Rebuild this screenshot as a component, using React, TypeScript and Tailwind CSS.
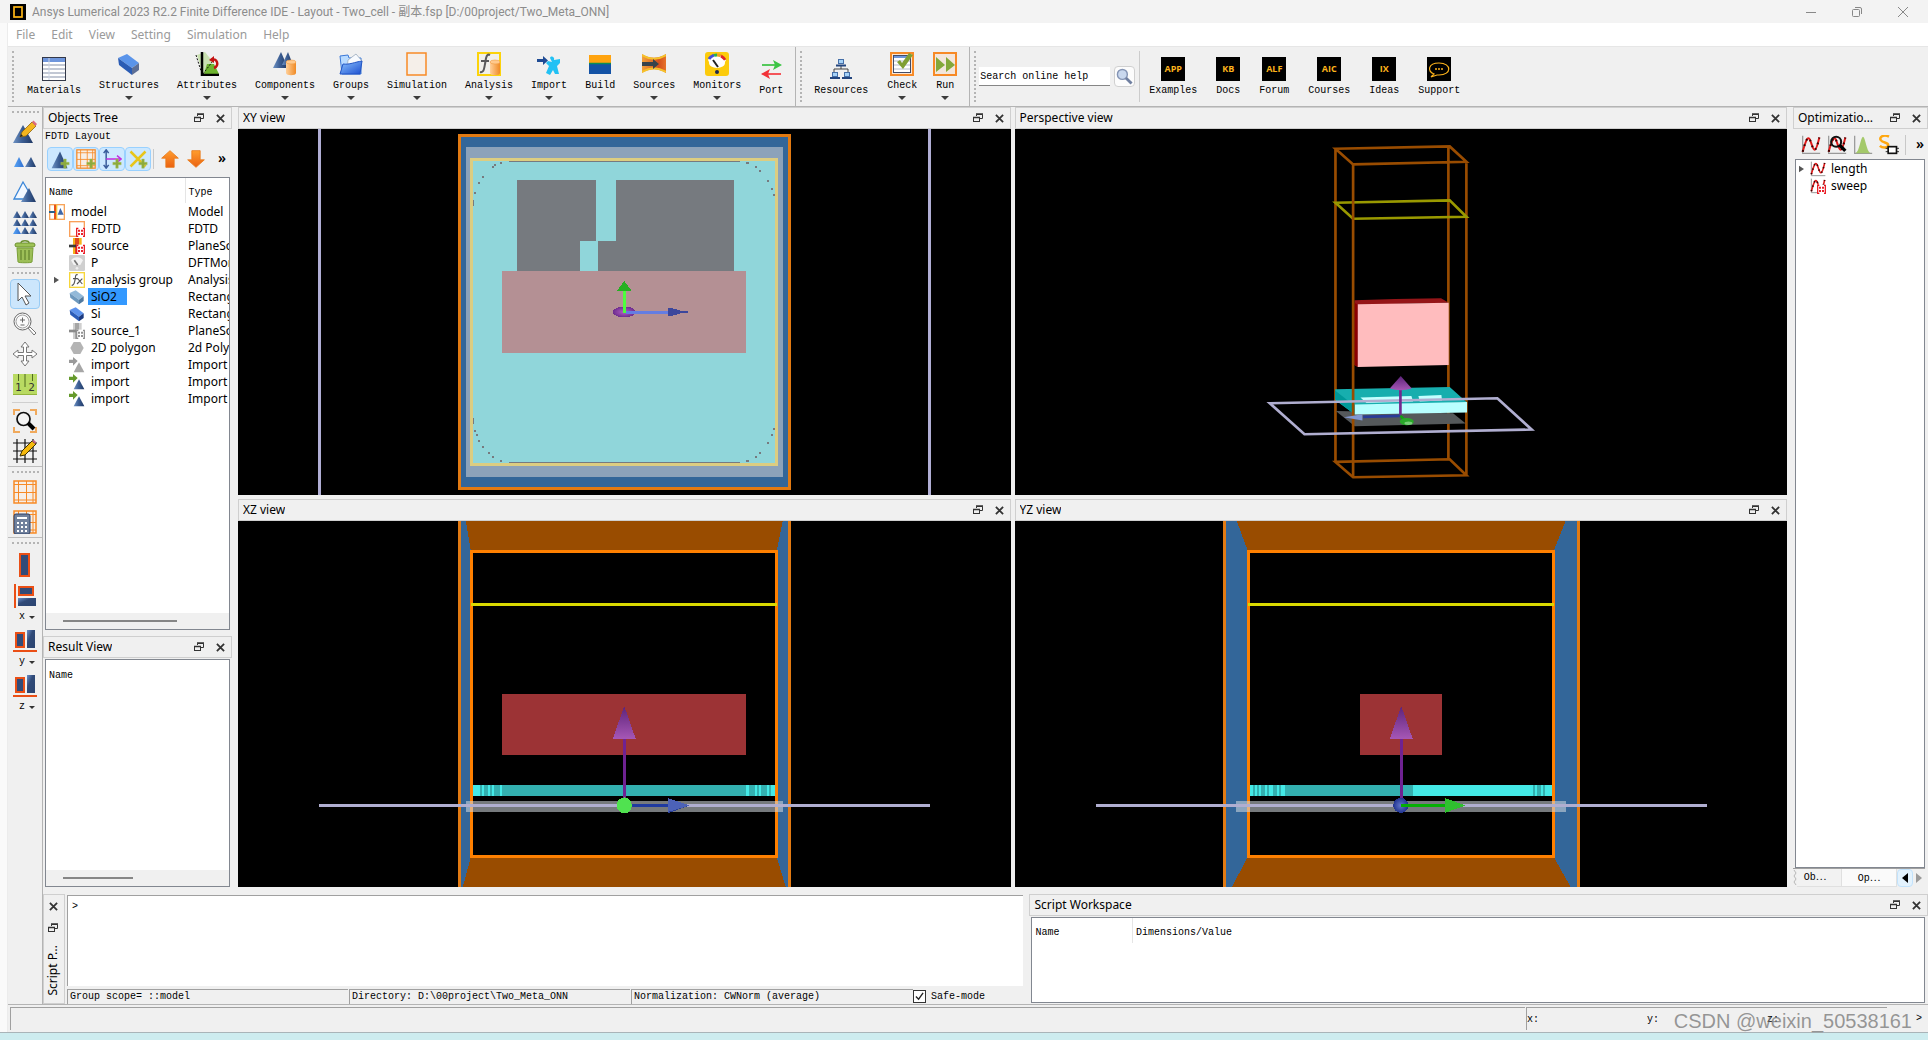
import { useState } from "react";
import type { ReactNode } from "react";

type ToolItem = {
  label: string;
  icon: ReactNode;
  menu?: boolean;
};

type TreeRow = {
  name: string;
  type: string;
  icon: ReactNode;
  root?: boolean;
  expandable?: boolean;
};

/* ---------- icons ---------- */

function Svg({ children, size = 24 }: { children: ReactNode; size?: number }) {
  return (
    <svg viewBox="0 0 24 24" width={size} height={size} fill="none" className="block shrink-0">
      {children}
    </svg>
  );
}

function Defs() {
  return (
    <svg width="0" height="0" className="absolute">
      <defs>
        <linearGradient id="navy" x1="0" y1="0" x2="1" y2="0">
          <stop offset="0" stopColor="#6f93c4" />
          <stop offset="0.45" stopColor="#3d5f94" />
          <stop offset="1" stopColor="#1f3864" />
        </linearGradient>
        <linearGradient id="sky" x1="0" y1="0" x2="1" y2="0">
          <stop offset="0" stopColor="#5aa5f5" />
          <stop offset="1" stopColor="#2f6fd0" />
        </linearGradient>
        <linearGradient id="cyl" x1="0" y1="0" x2="1" y2="0">
          <stop offset="0" stopColor="#ffd09a" />
          <stop offset="1" stopColor="#f08a24" />
        </linearGradient>
        <linearGradient id="orange" x1="0" y1="0" x2="0" y2="1">
          <stop offset="0" stopColor="#ff9d2e" />
          <stop offset="1" stopColor="#ea6112" />
        </linearGradient>
        <linearGradient id="slab" x1="0" y1="0" x2="1" y2="1">
          <stop offset="0" stopColor="#6b8fc9" />
          <stop offset="0.4" stopColor="#304a78" />
          <stop offset="1" stopColor="#2b4470" />
        </linearGradient>
        <linearGradient id="folder" x1="0" y1="0" x2="1" y2="1">
          <stop offset="0" stopColor="#8ec5ff" />
          <stop offset="1" stopColor="#1c4fd0" />
        </linearGradient>
        <linearGradient id="purple" x1="0" y1="0" x2="0" y2="1">
          <stop offset="0" stopColor="#5c2379" />
          <stop offset="1" stopColor="#a657b6" />
        </linearGradient>
        <radialGradient id="ball">
          <stop offset="0" stopColor="#b561c4" />
          <stop offset="1" stopColor="#6c2b8e" />
        </radialGradient>
        <radialGradient id="blueBall">
          <stop offset="0" stopColor="#6478cc" />
          <stop offset="1" stopColor="#20338f" />
        </radialGradient>
        <linearGradient id="beam" x1="0" y1="0" x2="1" y2="0">
          <stop offset="0" stopColor="#f2a13c" />
          <stop offset="0.7" stopColor="#d24f1e" />
          <stop offset="1" stopColor="#e8732a" />
        </linearGradient>
      </defs>
    </svg>
  );
}

const Plus = () => <path d="M13 16h3.500v-4h3v4H23v3h-3.500v4h-3v-4H13z" fill="#8cab3d" stroke="#a9c25e" strokeWidth="0.5" />;

const PencilShape = () => (
  <g>
    <path d="M7 17l2-5L19 2l4 4-10 10z" fill="#f4b51e" stroke="#8c6410" strokeWidth="0.8" />
    <path d="M19 2l1.500-1.500 3.500 3.500L22.500 6z" fill="#dc6a80" />
    <path d="M7 17l1-3 2 2z" fill="#222" />
  </g>
);

const MaterialsIcon = () => (
  <Svg>
    <rect x="0.500" y="0.500" width="23" height="23" fill="#fff" stroke="#333848" />
    <rect x="1" y="1" width="22" height="4" fill="#6f96dc" />
    <path d="M1 8h22M1 12h22M1 16h22M1 20h22" stroke="#aeb6c6" strokeWidth="1.500" />
    <path d="M7 1v22" stroke="#cdd5e4" />
  </Svg>
);

const Slab = ({ top, side, end }: { top: string; side: string; end: string }) => (
  <g>
    <path d="M1 6l9-4 12 9-7 5z" fill={top} />
    <path d="M1 6l14 10v7L2 13z" fill={side} />
    <path d="M15 16l7-5v7l-7 5z" fill={end} />
  </g>
);

const StructuresIcon = () => (
  <Svg>
    <Slab top="#5a94ea" side="#2a5cb4" end="#5d6f96" />
  </Svg>
);

const AttributesIcon = () => (
  <Svg>
    <path d="M2 3l8-3 8 10-4 8-6 4z" fill="#c9e0b0" />
    <path d="M12 12h7l5 10H9z" fill="#6db32e" />
    <path d="M7 0v23h17" stroke="#000" strokeWidth="2.500" />
    <path d="M1 3l5 16M8 22l9-12" stroke="#111" strokeDasharray="2 1.500" />
    <path d="M16 8c6-3 9 6 3 8" stroke="#c41212" strokeWidth="2.500" />
    <path d="M14 8l5-4v7z" fill="#c41212" />
  </Svg>
);

const Cylinder = () => (
  <g>
    <path d="M13 10v11c0 3 10 3 10 0V10z" fill="url(#cyl)" />
    <ellipse cx="18" cy="10" rx="5" ry="2" fill="#ffc98c" stroke="#f09a42" strokeWidth="0.600" />
  </g>
);

const ComponentsIcon = () => (
  <Svg>
    <path d="M8 0l7 16H0z" fill="url(#navy)" />
    <path d="M15 0l5 13H9z" fill="url(#navy)" />
    <Cylinder />
  </Svg>
);

const GroupsIcon = () => (
  <Svg>
    <path d="M1 4l8-1 1 3h12v16H3z" fill="#b9dbff" stroke="#3b78d8" />
    <path d="M9 8l8-6 6 7-4 8H8z" fill="#f7fafe" stroke="#9ab" strokeWidth="0.800" />
    <path d="M1 22l3-10c6 1 12-2 19-3l-2 13z" fill="url(#folder)" stroke="#2255c4" />
  </Svg>
);

const SimulationIcon = () => (
  <Svg>
    <rect x="2" y="1" width="19" height="22" fill="#f5efe9" stroke="#f78a26" strokeWidth="1.500" />
  </Svg>
);

const AnalysisIcon = () => (
  <Svg>
    <rect x="1" y="1" width="22" height="22" fill="#f1f0ea" stroke="#fcd30a" strokeWidth="2" />
    <path d="M13 3c-4-2-4 4-5 9s-1 9-5 8M4 9h8" stroke="#5a5a5a" strokeWidth="2" />
    <Cylinder />
  </Svg>
);

const ImportIcon = () => (
  <Svg>
    <path d="M0 7h6V4l5 4.500L6 13v-3H0z" fill="#1f4b94" />
    <path d="M13 6c1-3 5-1 4 2l6-1v4l-3 3 2 8h-4l-2-4-3 5-4-2 3-7-3-3 2-2 4 1z" fill="#22c1f4" />
  </Svg>
);

const BuildIcon = () => (
  <Svg>
    <rect x="1" y="3" width="22" height="9" fill="#ffa30f" />
    <rect x="1" y="11" width="22" height="11" fill="#1453a6" />
    <path d="M1 11.500h22" stroke="#0c8f55" strokeWidth="1.500" />
  </Svg>
);

const SourcesIcon = () => (
  <Svg>
    <path d="M0 2c8 5 16 5 24 0v19c-8-5-16-5-24 0z" fill="url(#beam)" />
    <path d="M0 3c8 5 16 5 24 0M0 20c8-5 16-5 24 0" stroke="#f5c22a" strokeWidth="2" />
    <path d="M0 10h11V7l6 5-6 5v-3H0z" fill="#37424c" />
  </Svg>
);

const MonitorsIcon = () => (
  <Svg>
    <rect x="0" y="0" width="24" height="24" rx="3" fill="#fccb0c" />
    <path d="M3 8c4-7 14-7 18 0l-3 6H6z" fill="#fff" />
    <path d="M4 7c1-2 3-3 5-4" stroke="#4750d8" strokeWidth="3" />
    <path d="M9 3.500c1-.5 2-.5 3-.5" stroke="#2bb24c" strokeWidth="3" />
    <path d="M12 3c2 0 3 0 4 1" stroke="#f0a020" strokeWidth="3" />
    <path d="M16 4c2 1 3 2 4 4" stroke="#e02626" strokeWidth="3" />
    <ellipse cx="12" cy="11" rx="8" ry="5" fill="#fff" />
    <path d="M8 8l5 7" stroke="#222" strokeWidth="2" />
    <circle cx="12" cy="20" r="2" fill="#1c2850" />
  </Svg>
);

const PortIcon = () => (
  <Svg>
    <path d="M3 8h13" stroke="#55c95b" strokeWidth="2" />
    <path d="M14 3l9 5-9 5 2-5z" fill="#3cc545" />
    <path d="M9 17h13" stroke="#f4555a" strokeWidth="2" />
    <path d="M11 12l-9 5 9 5-2-5z" fill="#f23238" />
  </Svg>
);

const ResourcesIcon = () => (
  <Svg>
    <path d="M12 8v4M5 15v-3h14v3" stroke="#444" />
    <rect x="9.500" y="2.500" width="5" height="4" fill="#a5d2f8" stroke="#456fa8" />
    <path d="M7 8.500h10" stroke="#23457e" strokeWidth="2" />
    <rect x="3.500" y="15.500" width="5" height="4" fill="#a5d2f8" stroke="#456fa8" />
    <rect x="15.500" y="15.500" width="5" height="4" fill="#a5d2f8" stroke="#456fa8" />
    <path d="M1 21h10M13 21h10" stroke="#23457e" strokeWidth="2" />
  </Svg>
);

const CheckIcon = () => (
  <Svg>
    <rect x="1" y="1" width="22" height="22" fill="#fbe6d5" stroke="#f78a26" strokeWidth="2" />
    <rect x="3.500" y="3.500" width="17" height="17" fill="#fff" stroke="#444c66" />
    <path d="M4 5h16" stroke="#6f96dc" strokeWidth="2" />
    <path d="M4 9h16M4 13h16M4 17h16" stroke="#b5bccb" />
    <path d="M7 10l3-2 2 3 7-10 4 2-10 14z" fill="#7f9f33" />
  </Svg>
);

const RunIcon = () => (
  <Svg>
    <rect x="1" y="1" width="22" height="22" fill="#f3e6dc" stroke="#f78a26" strokeWidth="2" />
    <path d="M3 5l9 8-9 7zM13 5l9 8-9 7z" fill="#84a83a" />
  </Svg>
);

const Badge = ({ text }: { text: string }) => (
  <span className="flex h-6 w-6 items-center justify-center bg-black font-['Open_Sans',sans-serif] text-[9px] font-bold text-[#fcb31c]">
    {text}
  </span>
);

const SupportIcon = () => (
  <Svg>
    <rect width="24" height="24" fill="#000" />
    <path d="M7 17c-7-3-6-11 5-11 13 0 13 12 0 12H10l-6 2z" stroke="#fcb31c" strokeWidth="1.200" />
    <path d="M8 12h2M11 12h2M14 12h2" stroke="#fcb31c" strokeWidth="1.500" />
  </Svg>
);

const TriPencilIcon = () => (
  <Svg>
    <path d="M10 5l10 18H0z" fill="url(#navy)" />
    <PencilShape />
  </Svg>
);

const TwoTriIcon = () => (
  <Svg>
    <path d="M6 7l5 10H1z" fill="url(#sky)" />
    <path d="M18 7l5 10H12z" fill="url(#navy)" />
  </Svg>
);

const TriOutlineIcon = () => (
  <Svg>
    <path d="M10 2l10 17H1z" fill="#f3f8ff" stroke="#3a86d8" strokeWidth="1.300" />
    <path d="M16 8l7 14H8z" fill="url(#navy)" />
  </Svg>
);

const TriArrayIcon = () => (
  <Svg>
    {[0, 8, 16].map((x) =>
      [1, 9, 17].map((y) => (
        <path
          key={`${x}-${y}`}
          d={`M${x + 4} ${y}l4 7h-8z`}
          fill={x === 0 && y === 17 ? "url(#sky)" : "url(#navy)"}
        />
      ))
    )}
  </Svg>
);

const TrashIcon = () => (
  <Svg>
    <path d="M8 3c0-3 8-3 8 0" stroke="#6d9030" strokeWidth="1.500" />
    <rect x="2" y="3" width="20" height="4" rx="2" fill="#9ec356" stroke="#6d9030" />
    <path d="M4 8h16l-1 14c0 1-14 1-14 0z" fill="#9dbf58" stroke="#7a9f38" />
    <path d="M8 10v10M12 10v10M16 10v10" stroke="#6d8f35" strokeWidth="1.500" />
  </Svg>
);

const CursorIcon = () => (
  <Svg>
    <path d="M5 1v18l4-4 4 8 3-2-4-7h6z" fill="#fff" stroke="#555" />
  </Svg>
);

const ZoomIcon = () => (
  <Svg>
    <circle cx="9.500" cy="9.500" r="8.500" fill="#fafafa" stroke="#666" strokeWidth="1" />
    <circle cx="9.500" cy="9.500" r="6.500" stroke="#888" strokeWidth="0.800" />
    <path d="M7 8h5M9.500 5.500v5M7.500 13h4" stroke="#666" />
    <path d="M15 16l6 7 2-2-6-6z" fill="#fff" stroke="#777" />
  </Svg>
);

const MoveIcon = () => (
  <Svg>
    <path
      d="M12 0l4 5h-2.500v5.500H19V8l5 4-5 4v-2.500h-5.500V19H16l-4 5-4-5h2.500v-5.500H5V16l-5-4 5-4v2.500h5.500V5H8z"
      fill="#fff"
      stroke="#777"
    />
  </Svg>
);

const RulerIcon = () => (
  <span className="relative block h-[21px] w-6 bg-[#b9da62] text-center font-['DejaVu_Sans_Mono',monospace] text-[11px] leading-[27px] text-[#333]">
    <svg viewBox="0 0 24 21" className="absolute inset-0" fill="none">
      <path d="M5.500 0v7M19.500 0v7M12 0v13" stroke="#4f6b1f" />
      <path d="M0 20.500h24" stroke="#94b53d" />
    </svg>
    1 2
  </span>
);

const FitIcon = () => (
  <Svg>
    <path d="M1 6V1h6M17 1h6v5M23 18v5h-6M7 23H1v-5" stroke="#f0a95c" strokeWidth="2" />
    <circle cx="10.500" cy="10" r="6.500" fill="#f4f4f4" stroke="#111" strokeWidth="1.700" />
    <path d="M15 14l6 6" stroke="#000" strokeWidth="4" />
  </Svg>
);

const GridPencilIcon = () => (
  <Svg>
    <path d="M4 0v24M12 0v24M20 0v24M0 4h24M0 12h24M0 20h24" stroke="#111" strokeWidth="1.200" />
    <path d="M7 17l2-5L19 2l4 3-11 11z" fill="#f4b90e" stroke="#3d3000" />
    <path d="M19 2l2-1 2 2-1 2z" fill="#c06282" />
  </Svg>
);

const GridShape = () => (
  <g stroke="#f78a26">
    <rect x="1" y="1" width="22" height="22" strokeWidth="1.500" fill="#f6eee7" />
    <path d="M5.500 1v22M13.500 1v22M20 1v22M1 4.500h22M1 12.500h22M1 20h22" />
  </g>
);

const GridIcon = () => (
  <Svg>
    <GridShape />
  </Svg>
);

const CalcIcon = () => (
  <Svg>
    <GridShape />
    <rect x="1" y="4" width="16" height="20" rx="2" fill="#71819d" stroke="#2c416b" />
    <path d="M4 8h10" stroke="#fff" strokeWidth="2" />
    <path d="M4 13h10M4 17h10M4 21h10" stroke="#fff" strokeWidth="2" strokeDasharray="2 2" />
  </Svg>
);

const RectIcon = () => (
  <Svg>
    <rect x="7" y="1" width="9" height="22" fill="#324b78" stroke="#ea4f16" strokeWidth="2" />
  </Svg>
);

const AlignXIcon = () => (
  <Svg>
    <path d="M2 0v24" stroke="#ea4f16" strokeWidth="2" />
    <rect x="6" y="3" width="14" height="8" fill="#324b78" stroke="#ea4f16" strokeWidth="2" />
    <rect x="5" y="14" width="18" height="8" fill="url(#slab)" />
  </Svg>
);

const AlignYIcon = () => (
  <Svg>
    <path d="M0 22h24" stroke="#ea4f16" strokeWidth="2" />
    <rect x="3" y="4" width="8" height="14" fill="#324b78" stroke="#ea4f16" strokeWidth="2" />
    <rect x="14" y="1" width="8" height="18" fill="url(#slab)" />
  </Svg>
);

const Matrix = ({ color }: { color: string }) => (
  <g>
    <rect x="11" y="10" width="13" height="14" fill="#fff" />
    <path d="M14 11h-2.500v12H14M21 11h2v12h-2" stroke={color} strokeWidth="1.800" />
    <path d="M15 13v3M19.500 13v3M15 18v3M19.500 18v3" stroke={color} strokeWidth="2.800" />
  </g>
);

const ModelIcon = () => (
  <Svg size={16}>
    <rect x="1" y="1" width="22" height="22" fill="#fff" stroke="#f7a45a" strokeWidth="2" />
    <path d="M9 1v22" stroke="#e8541c" strokeWidth="3" />
    <path d="M11.500 1v22" stroke="#f6c53c" strokeWidth="2" />
    <path d="M0 12h9" stroke="#2d6288" strokeWidth="3" />
    <path d="M17 6l5 10h-9z" fill="#3f67a8" />
  </Svg>
);

const FdtdIcon = () => (
  <Svg size={16}>
    <rect x="1" y="1" width="22" height="22" fill="#fff" stroke="#f9a05a" strokeWidth="2" />
    <Matrix color="#e8121c" />
  </Svg>
);

const SourceIcon = ({ gray = false }: { gray?: boolean }) => (
  <Svg size={16}>
    <rect x="6" y="0" width="13" height="24" fill={gray ? "#cfcfcf" : "#f5b31c"} />
    <rect x="9" y="0" width="6" height="24" fill={gray ? "#a5a5a5" : "#dd4a1c"} />
    <path d="M0 12h13" stroke={gray ? "#8a8a8a" : "#3a3a3a"} strokeWidth="4" />
    <Matrix color={gray ? "#8c8c8c" : "#e8121c"} />
  </Svg>
);

const MonitorGrayIcon = () => (
  <Svg size={16}>
    <rect width="24" height="24" rx="2" fill="#cfcfcf" />
    <path d="M3 8c4-6 14-6 18 0l-4 7H7z" fill="#f3f3f3" />
    <path d="M8 8l5 7" stroke="#777" strokeWidth="2.500" />
    <circle cx="12" cy="20" r="2" fill="#eee" />
  </Svg>
);

const FxIcon = () => (
  <Svg size={16}>
    <rect x="1" y="1" width="22" height="22" fill="#fff" stroke="#f7d63a" strokeWidth="2" />
    <path d="M13 4c-4-1-3 4-4 8s-1 8-5 8M6 10h7M13 10l7 8M20 10l-8 8" stroke="#555" strokeWidth="1.700" />
  </Svg>
);

const SlabIcon = ({ pale = false }: { pale?: boolean }) => (
  <Svg size={16}>
    {pale ? (
      <Slab top="#93b9d8" side="#6d98bd" end="#51799e" />
    ) : (
      <Slab top="#5c92ec" side="#2a5cb8" end="#1b3a80" />
    )}
  </Svg>
);

const PolygonIcon = () => (
  <Svg size={16}>
    <path d="M7 3h10l5 9-5 9H7l-5-9z" fill="#b4b4b4" />
  </Svg>
);

const ImportRowIcon = ({ gray = false }: { gray?: boolean }) => (
  <Svg size={16}>
    <path d="M15 8l8 15H7z" fill={gray ? "#a6a6a6" : "url(#navy)"} />
    <path d="M0 4h6V0l7 6-7 7V9H0z" fill={gray ? "#9a9a9a" : "#659a2c"} />
  </Svg>
);

const SweepShape = () => (
  <g>
    <path d="M2 1v21h21" stroke="#999" strokeWidth="1.500" />
    <path d="M2 20C7 2 9 0 12 9s5 16 10-6" stroke="#e01919" strokeWidth="2.400" />
    <path d="M2 20C7 2 9 0 12 9s5 16 10-6" stroke="#300" strokeWidth="2.400" strokeDasharray="2 5" />
  </g>
);

const FloatIcon = () => (
  <svg viewBox="0 0 10 10" width="10" height="10" fill="none" stroke="#333">
    <path d="M3.500 3V1.500h6v4H7" />
    <path d="M3 1h7" strokeWidth="1.500" />
    <rect x="0.500" y="4.500" width="6" height="4" />
    <path d="M0 4.500h7" strokeWidth="1.500" />
  </svg>
);

const CloseIcon = () => (
  <svg viewBox="0 0 10 10" width="9" height="9" stroke="#333" strokeWidth="2">
    <path d="M1 1l8 8M9 1L1 9" />
  </svg>
);

/* ---------- data ---------- */

const mainTools: ToolItem[] = [
  { label: "Materials", icon: <MaterialsIcon /> },
  { label: "Structures", icon: <StructuresIcon />, menu: true },
  { label: "Attributes", icon: <AttributesIcon />, menu: true },
  { label: "Components", icon: <ComponentsIcon />, menu: true },
  { label: "Groups", icon: <GroupsIcon />, menu: true },
  { label: "Simulation", icon: <SimulationIcon />, menu: true },
  { label: "Analysis", icon: <AnalysisIcon />, menu: true },
  { label: "Import", icon: <ImportIcon />, menu: true },
  { label: "Build", icon: <BuildIcon />, menu: true },
  { label: "Sources", icon: <SourcesIcon />, menu: true },
  { label: "Monitors", icon: <MonitorsIcon />, menu: true },
  { label: "Port", icon: <PortIcon /> },
];

const runTools: ToolItem[] = [
  { label: "Resources", icon: <ResourcesIcon /> },
  { label: "Check", icon: <CheckIcon />, menu: true },
  { label: "Run", icon: <RunIcon />, menu: true },
];

const helpTools: ToolItem[] = [
  { label: "Examples", icon: <Badge text="APP" /> },
  { label: "Docs", icon: <Badge text="KB" /> },
  { label: "Forum", icon: <Badge text="ALF" /> },
  { label: "Courses", icon: <Badge text="AIC" /> },
  { label: "Ideas", icon: <Badge text="IX" /> },
  { label: "Support", icon: <SupportIcon /> },
];

const treeRows: TreeRow[] = [
  { name: "model", type: "Model", icon: <ModelIcon />, root: true },
  { name: "FDTD", type: "FDTD", icon: <FdtdIcon /> },
  { name: "source", type: "PlaneSource", icon: <SourceIcon /> },
  { name: "P", type: "DFTMonitor", icon: <MonitorGrayIcon /> },
  { name: "analysis group", type: "Analysis Group", icon: <FxIcon />, expandable: true },
  { name: "SiO2", type: "Rectangle", icon: <SlabIcon pale /> },
  { name: "Si", type: "Rectangle", icon: <SlabIcon /> },
  { name: "source_1", type: "PlaneSource", icon: <SourceIcon gray /> },
  { name: "2D polygon", type: "2d Polygon", icon: <PolygonIcon /> },
  { name: "import", type: "Import", icon: <ImportRowIcon gray /> },
  { name: "import", type: "Import", icon: <ImportRowIcon /> },
  { name: "import", type: "Import", icon: <ImportRowIcon /> },
];

const menus = ["File", "Edit", "View", "Setting", "Simulation", "Help"];

/* ---------- shared pieces ---------- */

function ToolGroup({ items, spaced = false }: { items: ToolItem[]; spaced?: boolean }) {
  return (
    <div className={`flex items-center pt-[2px] ${spaced ? "gap-px" : ""}`}>
      {items.map((item) => (
        <button key={item.label} className="flex flex-col items-center px-[9px]">
          <span className="-mx-1 flex h-6 w-6 items-center justify-center">{item.icon}</span>
          <span className="pt-[2px] text-[10px] leading-4">{item.label}</span>
          {item.menu && (
            <svg viewBox="0 0 10 10" width="10" height="10" className="-mt-px">
              <path d="M1 3h8L5 7z" fill="#3c3c3c" />
            </svg>
          )}
        </button>
      ))}
    </div>
  );
}

const GripV = () => <div className="my-1 w-0 border-l-2 border-dotted border-[#b4b4b4]" />;
const GripH = () => <div className="my-1 h-0 w-[27px] self-center border-t-2 border-dotted border-[#b4b4b4]" />;

function DockTitle({ title }: { title: string }) {
  return (
    <div className="flex h-[22px] shrink-0 items-center justify-between border border-[#cfcfcf] pr-[6px] pl-1 font-['Noto_Sans','Noto_Sans_CJK_SC',sans-serif] text-xs">
      <span className="mr-3 truncate pb-px leading-[19px]">{title}</span>
      <span className="flex shrink-0 items-center gap-3">
        <button aria-label={`Float ${title}`}>
          <FloatIcon />
        </button>
        <button aria-label={`Close ${title}`}>
          <CloseIcon />
        </button>
      </span>
    </div>
  );
}

function View({ title, children }: { title: string; children: ReactNode }) {
  return (
    <section className="flex min-h-0 min-w-0 flex-col">
      <DockTitle title={title} />
      <div className="min-h-0 flex-1 bg-black">
        <svg viewBox="0 0 773 366" className="block h-full w-full">
          {children}
        </svg>
      </div>
    </section>
  );
}

function SideButton({ label, active, onClick, children }: { label: string; active?: boolean; onClick?: () => void; children: ReactNode }) {
  return (
    <button
      aria-label={label}
      onClick={onClick}
      className={`mx-[2px] flex h-[30px] items-center justify-center rounded-sm border ${
        active ? "border-[#99ccf5] bg-[#cce6fc]" : "border-transparent"
      }`}
    >
      {children}
    </button>
  );
}

function AlignButton({ label, children }: { label: string; children: ReactNode }) {
  return (
    <button className="flex h-[45px] flex-col items-center pt-1">
      {children}
      <span className="flex items-center gap-1 pt-px pl-1 text-[10px] leading-4">
        {label}
        <svg viewBox="0 0 6 6" width="6" height="6">
          <path d="M0 2h6L3 5z" fill="#333" />
        </svg>
      </span>
    </button>
  );
}

const SideRule = () => <div className="h-px shrink-0 bg-[#bdbdbd]" />;

/* ---------- scenes ---------- */

const dots = [
  [182, 158], [164, 164], [158, 170], [128, 200], [116, 218], [104, 248],
  [920, 158], [924, 158], [948, 170], [960, 182], [984, 212], [996, 236], [1002, 254],
  [104, 962], [110, 974], [116, 992], [128, 1010], [146, 1028], [158, 1040], [182, 1052],
  [1002, 956], [996, 974], [984, 998], [960, 1028], [948, 1040], [920, 1052], [924, 1052],
];

function XYScene() {
  return (
    <g shapeRendering="crispEdges">
      <path d="M81.500 0v366M691.500 0v366" stroke="#b0aed4" strokeWidth="3" />
      <rect x="221.500" y="6.500" width="330" height="353" fill="#336699" stroke="#e27a12" strokeWidth="3" />
      <rect x="228" y="18" width="317" height="330" fill="#8ca2ba" />
      <rect x="233.500" y="30.500" width="305" height="305" fill="#90d6da" stroke="#dccd81" strokeWidth="3" />
      <path d="M271 32.500h231M271 333.500h231M235.500 71v6M235.500 289v6" stroke="#767a7f" />
      {dots.map(([x, y]) => (
        <rect key={`${x}-${y}`} x={Math.round(201 + x / 3)} y={Math.round(y / 3 - 20)} width="2" height="2" fill="#767a7f" />
      ))}
      <path d="M279 51h79v61h-16v30h-63zM378 51h118v91H360v-30h18z" fill="#767a7f" />
      <rect x="264" y="142" width="244" height="82" fill="#b49094" />
      <ellipse cx="386.500" cy="183" rx="11.500" ry="5.500" fill="url(#ball)" />
      <path d="M388 183.500h42" stroke="#647de2" strokeWidth="3" />
      <path d="M430 179h2l6 1 6 2h6v2h-6l-6 2-6 1h-2z" fill="#3b469c" />
      <path d="M386.500 162v22" stroke="#4dff3c" strokeWidth="3" />
      <path d="M386.500 152l7.500 10h-15z" fill="#25b022" />
    </g>
  );
}

function PerspectiveScene() {
  return (
    <g transform="translate(225 -9) scale(0.33333)" fill="none" strokeWidth="8">
      <path d="M287 86L630 79L680 125L340 133ZM287 1026L630 1018L680 1066L340 1072ZM287 86V1026M626 79V1018M680 125V1066" stroke="#994c00" />
      <path d="M287 248L630 241L680 290L340 296Z" stroke="#999900" />
      <path d="M344 541L466 537L604 535L627 548L354 554V741L344 735Z" fill="#951518" />
      <path d="M344 548V735L354 741V554Z" fill="#8b0000" />
      <path d="M354 553L627 548V735L354 741Z" fill="#ffbcbe" />
      <path d="M288 873L640 880L678 911L345 919Z" fill="#55595b" />
      <path d="M286 808L630 801L682 848L345 856V884L286 840Z" fill="#17aeae" />
      <path d="M286 812L345 858V884L286 838Z" fill="#009999" />
      <path d="M345 854L682 846V878L345 884Z" fill="#b8ffff" />
      <path d="M362 833L515 828L520 845L380 849ZM536 828L605 825L607 842L540 845Z" fill="#c4ffff" />
      <path d="M340 133V1072" stroke="#994c00" />
      <path d="M90 850L773 835L876 929L194 943Z" stroke="#b0aed0" />
      <path d="M482 888L370 891" stroke="#2a3c98" />
      <path d="M312 892L368 883V902Z" fill="#8197d2" />
      <path d="M482 888L498 904" stroke="#12a012" />
      <ellipse cx="501" cy="905" rx="21" ry="11" fill="#2aa82a" />
      <ellipse cx="506" cy="910" rx="12" ry="5" fill="#77cf77" />
      <path d="M482 808V884" stroke="#74288e" />
      <path d="M483 768L516 806Q483 816 450 806Z" fill="url(#purple)" />
    </g>
  );
}

type SideSceneProps = {
  wall: number;
  topInset: number;
  bottomInset: number;
  source: [number, number];
  plate: [number, number];
  base: string;
  children: ReactNode;
};

/* XZ and YZ share the same frame, only the wall thickness and contents differ */
function SideScene({ wall, topInset, bottomInset, source, plate, base, children }: SideSceneProps) {
  return (
    <g shapeRendering="crispEdges">
      <rect x={wall} y="0" width={773 - wall * 2} height="366" fill="#336699" />
      <path d={`M${topInset} 0H${773 - topInset}L539 30H233Z`} fill="#994c00" />
      <path d={`M233 336H539L${773 - bottomInset} 366H${bottomInset}Z`} fill="#994c00" />
      <path d={`M${wall + 1.5} 0V366M${771.5 - wall} 0V366`} stroke="#e27a12" strokeWidth="3" />
      <rect x="233.500" y="30.500" width="305" height="305" fill="#000" stroke="#ff8000" strokeWidth="3" />
      <rect x="233" y="82" width="306" height="3" fill="#dada00" />
      <rect x={source[0]} y="173" width={source[1]} height="61" fill="#9c3335" />
      <rect x="235" y="264" width="302" height="11" fill="#33b0b0" />
      <path d={base} fill="#44e9e6" />
      <rect x={plate[0]} y="280" width={plate[1]} height="11" fill="#cfd6dc" opacity="0.57" />
      <rect x="81" y="283" width="611" height="3" fill="#b0aed0" />
      <rect x="385" y="218" width="3" height="60" fill="#6f2292" />
      <path d="M386.500 185l11.500 33h-23z" fill="url(#purple)" />
      {children}
    </g>
  );
}

/* ---------- panels ---------- */

function ObjectsTree() {
  const [selected, setSelected] = useState(5);

  return (
    <section className="flex min-h-0 flex-1 flex-col">
      <DockTitle title="Objects Tree" />
      <div className="pl-[2px] text-[10px] leading-[15px]">FDTD Layout</div>
      <div className="flex h-[29px] items-center pl-1">
        {[
          <path key="a" d="M12 3l9 20H2z" fill="url(#navy)" />,
          <GridShape key="b" />,
          <g key="c">
            <path d="M5 2v20M2 5l3-4 3 4M2 19l3 4 3-4" stroke="#3a5d9c" strokeWidth="1.800" />
            <path d="M5 12h16M18 8l5 4-5 4" stroke="#c32ae0" strokeWidth="1.800" />
          </g>,
          <path key="d" d="M3 3l18 18M21 3L3 21" stroke="#e8c51b" strokeWidth="3" />,
        ].map((shape, i) => (
          <button
            key={i}
            aria-label={["Add structure", "Add mesh", "Add axis", "Add source"][i]}
            className="flex h-6 w-[26px] items-center justify-center rounded-sm border border-[#99d1ff] bg-[#cce8ff]"
          >
            <Svg size={20}>
              {shape}
              <Plus />
            </Svg>
          </button>
        ))}
        <div className="ml-[2px] h-5 w-px bg-[#c8c8c8]" />
        <button aria-label="Move up" className="ml-[6px]">
          <Svg size={20}>
            <path d="M12 2l10 9h-5v11H7V11H2z" fill="url(#orange)" stroke="#e87818" />
          </Svg>
        </button>
        <button aria-label="Move down" className="ml-[6px]">
          <Svg size={20}>
            <path d="M12 22l10-9h-5V2H7v11H2z" fill="url(#orange)" stroke="#e87818" />
          </Svg>
        </button>
        <button aria-label="More" className="ml-3 pb-[2px] font-['Noto_Sans',sans-serif] text-sm leading-none font-semibold">
          »
        </button>
      </div>
      <div className="mt-1 mr-[2px] ml-[2px] flex min-h-0 flex-1 flex-col border border-[#828790] bg-white">
        <div className="min-h-0 flex-1 overflow-hidden">
          <table className="w-[250px] table-fixed border-collapse">
            <thead>
              <tr className="h-[25px] text-left text-[10px]">
                <th className="w-[139px] border-r border-[#e5e5e5] pt-1 pl-[3px] font-normal">Name</th>
                <th className="pt-1 pl-[3px] font-normal">Type</th>
              </tr>
            </thead>
            <tbody className="font-['Noto_Sans',sans-serif] text-xs">
              {treeRows.map((row, i) => (
                <tr key={i} onClick={() => setSelected(i)} className="h-[17px]">
                  <td className="p-0">
                    <div className={`flex h-[17px] items-center ${row.root ? "pl-[3px]" : "pl-2"}`}>
                      {!row.root && (
                        <svg viewBox="0 0 6 8" width="5" height="8" className="mr-[10px]">
                          {row.expandable && <path d="M0 0l6 4-6 4z" fill="#555" />}
                        </svg>
                      )}
                      {row.icon}
                      <span
                        className={`ml-[3px] pl-[3px] leading-[17px] whitespace-nowrap ${
                          selected === i ? "bg-[#3399ff] pr-[10px]" : ""
                        }`}
                      >
                        {row.name}
                      </span>
                    </div>
                  </td>
                  <td className="p-0 pl-[3px] leading-[17px] whitespace-nowrap">{row.type}</td>
                </tr>
              ))}
            </tbody>
          </table>
        </div>
        <div className="flex h-4 items-center bg-[#f0f0f0] pl-[17px]">
          <div className="h-[2px] w-[114px] bg-[#868686]" />
        </div>
      </div>
    </section>
  );
}

function ResultView() {
  return (
    <section className="mt-[6px] flex h-[251px] shrink-0 flex-col">
      <DockTitle title="Result View" />
      <div className="mt-px mr-[2px] ml-[2px] flex flex-1 flex-col border border-[#828790] bg-white">
        <div className="flex-1 pt-2 pl-[3px] text-[10px] leading-4">Name</div>
        <div className="flex h-4 items-center bg-[#f0f0f0] pl-[17px]">
          <div className="h-[2px] w-[70px] bg-[#868686]" />
        </div>
      </div>
    </section>
  );
}

function OptimizationPanel() {
  return (
    <section className="flex w-[135px] shrink-0 flex-col">
      <DockTitle title="Optimizations and Sweeps" />
      <div className="flex h-[30px] items-center gap-[6px] pt-px pl-2">
        <button aria-label="Create sweep">
          <Svg size={20}>
            <SweepShape />
          </Svg>
        </button>
        <button aria-label="Create optimization">
          <Svg size={20}>
            <SweepShape />
            <circle cx="11" cy="8" r="6" stroke="#111" strokeWidth="2.500" />
            <path d="M15 12l7 7" stroke="#000" strokeWidth="4" />
          </Svg>
        </button>
        <button aria-label="Create yield analysis">
          <Svg size={20}>
            <path d="M2 1v21h21" stroke="#999" strokeWidth="1.500" />
            <path d="M3 22c5-3 6-19 9-20 3 1 4 17 9 20z" fill="#a4c96a" />
          </Svg>
        </button>
        <button aria-label="Create S-parameter sweep">
          <Svg size={20}>
            <path d="M12 2C6-1 0 2 2 6s9 2 9 6-7 4-10 1" stroke="#ffa70f" strokeWidth="3" />
            <rect x="11" y="14" width="10" height="8" fill="#fff" stroke="#111" strokeWidth="2" />
            <path d="M8 16h3M8 20h3M21 16h3M21 20h3" stroke="#111" />
          </Svg>
        </button>
        <div className="h-5 w-px bg-[#c8c8c8]" />
        <button aria-label="More" className="pb-[2px] pl-1 font-['Noto_Sans',sans-serif] text-sm leading-none font-semibold">
          »
        </button>
      </div>
      <ul className="mr-[3px] ml-[2px] flex-1 border border-[#828790] bg-white font-['Noto_Sans',sans-serif] text-xs leading-[17px]">
        <li className="flex items-center pl-[3px]">
          <svg viewBox="0 0 6 8" width="5" height="8" className="mr-[6px]">
            <path d="M0 0l6 4-6 4z" fill="#555" />
          </svg>
          <Svg size={16}>
            <SweepShape />
          </Svg>
          <span className="ml-[5px]">length</span>
        </li>
        <li className="flex items-center pl-[14px]">
          <Svg size={16}>
            <SweepShape />
            <Matrix color="#e8121c" />
          </Svg>
          <span className="ml-[5px]">sweep</span>
        </li>
      </ul>
      <div className="mr-[3px] flex h-[19px] items-stretch border-t border-[#a0a0a0] text-[10px]">
        <svg viewBox="0 0 4 18" width="4" height="18" fill="none" stroke="#b8b8b8">
          <path d="M1 1l2 3-2 3 2 3-2 3 2 3" />
        </svg>
        <button className="w-[45px] border-r border-b border-[#e0e0e0] bg-[#f2f2f2] pr-2">Ob⋯</button>
        <button className="w-[55px] border-r border-b border-[#e0e0e0] bg-[#fafafa] pt-[2px]">Op⋯</button>
        <button aria-label="Previous tab" className="flex w-4 items-center justify-center rounded-sm border border-[#c2e2fb] bg-[#e3f2fd]">
          <svg viewBox="0 0 6 10" width="6" height="10">
            <path d="M6 0v10L0 5z" fill="#000" />
          </svg>
        </button>
        <button aria-label="Next tab" className="flex flex-1 items-center justify-center">
          <svg viewBox="0 0 6 10" width="6" height="10">
            <path d="M0 0v10l6-5z" fill="#9a9a9a" />
          </svg>
        </button>
      </div>
    </section>
  );
}

function ScriptPrompt() {
  return (
    <section className="flex min-w-0 flex-[981] gap-[2px]">
      <div className="flex w-[22px] shrink-0 flex-col items-center gap-3 border border-[#cfcfcf] pt-[7px] pr-[2px]">
        <button aria-label="Close Script Prompt">
          <CloseIcon />
        </button>
        <button aria-label="Float Script Prompt">
          <FloatIcon />
        </button>
        <span className="rotate-180 font-['Noto_Sans',sans-serif] text-xs leading-[18px] [writing-mode:vertical-rl]">Script P...</span>
      </div>
      <div className="flex min-w-0 flex-1 flex-col text-[10px]">
        <textarea
          aria-label="Script prompt"
          defaultValue=">"
          className="mt-px min-h-0 flex-1 resize-none border-t border-l border-[#a0a0a0] bg-white px-1 py-[3px] leading-4 outline-none"
        />
        <div className="mt-[3px] flex h-[15px] leading-[14px] whitespace-pre">
          <span className="w-[281px] border-t border-l border-[#a0a0a0] pl-[2px]">Group scope= ::model</span>
          <span className="ml-px w-[281px] border-t border-l border-[#a0a0a0] pl-[2px]">Directory: D:\00project\Two_Meta_ONN</span>
          <span className="ml-px w-[282px] border-t border-l border-[#a0a0a0] pl-[2px]">Normalization: CWNorm (average)</span>
          <label className="flex items-center gap-[5px]">
            <input type="checkbox" defaultChecked className="peer sr-only" />
            <span className="flex h-[13px] w-[13px] items-center justify-center border border-[#333] bg-white">
              <svg viewBox="0 0 10 10" width="9" height="9" fill="none" stroke="#222" strokeWidth="1.500">
                <path d="M1 5l3 3 5-7" />
              </svg>
            </span>
            Safe-mode
          </label>
        </div>
      </div>
    </section>
  );
}

function ScriptWorkspace() {
  return (
    <section className="ml-[6px] flex min-w-0 flex-[899] flex-col">
      <DockTitle title="Script Workspace" />
      <div className="mt-px mr-[3px] mb-px ml-[2px] flex-1 border border-[#828790] bg-white">
        <table className="w-full table-fixed border-collapse text-left text-[10px]">
          <thead>
            <tr className="h-[25px]">
              <th className="w-[100px] border-r border-[#e5e5e5] pt-[3px] pl-[3px] font-normal">Name</th>
              <th className="pt-[3px] pl-[3px] font-normal">Dimensions/Value</th>
            </tr>
          </thead>
        </table>
      </div>
    </section>
  );
}

export default function App() {
  const [tool, setTool] = useState("select");

  return (
    <div className="flex h-screen flex-col overflow-hidden bg-[#f0f0f0] font-['Liberation_Mono','Noto_Sans_CJK_SC',monospace] text-black">
      <Defs />

      <header className="flex h-[23px] shrink-0 items-center bg-[#f3f3f3] pr-5 pl-[10px] font-['Roboto','Noto_Sans_CJK_SC',sans-serif] text-xs text-[#8c8c8c]">
        <svg viewBox="0 0 16 16" width="16" height="16">
          <rect width="16" height="16" fill="#000" />
          <rect x="4" y="3" width="8" height="10" fill="none" stroke="#fdb515" strokeWidth="1.700" />
        </svg>
        <h1 className="ml-[6px] flex-1 truncate">
          Ansys Lumerical 2023 R2.2 Finite Difference IDE - Layout - Two_cell - 副本.fsp [D:/00project/Two_Meta_ONN]
        </h1>
        <div className="flex items-center gap-[36px]">
          <button aria-label="Minimize">
            <svg viewBox="0 0 10 10" width="10" height="10" stroke="#888">
              <path d="M0 5.500h10" />
            </svg>
          </button>
          <button aria-label="Restore">
            <svg viewBox="0 0 10 10" width="10" height="10" fill="none" stroke="#888">
              <rect x="0.500" y="2.500" width="7" height="7" rx="1" />
              <path d="M3 .5h5q1.500 0 1.500 1.500v5" />
            </svg>
          </button>
          <button aria-label="Close">
            <svg viewBox="0 0 10 10" width="10" height="10" stroke="#888">
              <path d="M0 0l10 10M10 0L0 10" />
            </svg>
          </button>
        </div>
      </header>

      <div className="flex min-h-0 flex-1">
        <div className="w-2 shrink-0 border-r border-[#ececec] bg-[#fafafa]" />
        <div className="flex min-w-0 flex-1 flex-col">
          <nav className="flex h-6 shrink-0 items-center gap-4 border-b border-[#e6e6e6] bg-white pl-2 font-['Noto_Sans',sans-serif] text-xs text-[#9a9a9a]">
            {menus.map((menu) => (
              <button key={menu}>{menu}</button>
            ))}
          </nav>

          <div className="flex h-[60px] shrink-0 items-stretch border-b border-[#b4b4b4] pl-1">
            <GripV />
            <div className="flex items-stretch border-r border-[#b4b4b4] pr-[3px] pl-1">
              <ToolGroup items={mainTools} />
            </div>
            <div className="w-1" />
            <GripV />
            <div className="flex items-stretch border-r border-[#b4b4b4] pr-[6px] pl-[3px]">
              <ToolGroup items={runTools} spaced />
            </div>
            <div className="w-1" />
            <GripV />
            <div className="flex items-center gap-1 pl-[3px]">
              <input
                type="text"
                aria-label="Search online help"
                defaultValue="Search online help"
                className="h-[19px] w-[131px] border-b border-[#868686] bg-white px-[1px] text-[10px] outline-none"
              />
              <button aria-label="Search" className="flex h-[21px] w-[21px] items-center justify-center rounded border border-[#d0d0d0] bg-[#fcfcfc]">
                <Svg size={17}>
                  <circle cx="9" cy="9" r="7" fill="#c9d8ee" stroke="#8494b4" strokeWidth="2" />
                  <path d="M14 14l8 8" stroke="#6f7fa0" strokeWidth="4" />
                </Svg>
              </button>
              <div className="my-1 h-[51px] w-px bg-[#cccccc]" />
            </div>
            <div className="flex">
              <ToolGroup items={helpTools} spaced />
            </div>
          </div>

          <div className="flex min-h-0 flex-1">
            <aside className="flex w-[35px] shrink-0 flex-col border-r border-[#b4b4b4]">
              <GripH />
              <div className="flex flex-col">
                <SideButton label="Edit object"><TriPencilIcon /></SideButton>
                <SideButton label="Duplicate"><TwoTriIcon /></SideButton>
                <SideButton label="Copy"><TriOutlineIcon /></SideButton>
                <SideButton label="Array"><TriArrayIcon /></SideButton>
                <SideButton label="Delete"><TrashIcon /></SideButton>
              </div>
              <SideRule />
              <GripH />
              <div className="flex flex-col pt-px">
                <SideButton label="Select" active={tool === "select"} onClick={() => setTool("select")}><CursorIcon /></SideButton>
                <SideButton label="Zoom" active={tool === "zoom"} onClick={() => setTool("zoom")}><ZoomIcon /></SideButton>
                <SideButton label="Pan" active={tool === "pan"} onClick={() => setTool("pan")}><MoveIcon /></SideButton>
                <SideButton label="Ruler" active={tool === "ruler"} onClick={() => setTool("ruler")}><RulerIcon /></SideButton>
                <div className="mx-1 my-[3px] h-px bg-[#cfcfcf]" />
                <SideButton label="Zoom extent"><FitIcon /></SideButton>
                <SideButton label="Edit grid"><GridPencilIcon /></SideButton>
              </div>
              <SideRule />
              <GripH />
              <div className="flex flex-col">
                <SideButton label="View mesh"><GridIcon /></SideButton>
                <SideButton label="Compute mesh"><CalcIcon /></SideButton>
              </div>
              <SideRule />
              <GripH />
              <div className="flex flex-col pt-[2px]">
                <SideButton label="Reference"><RectIcon /></SideButton>
                <AlignButton label="x"><AlignXIcon /></AlignButton>
                <AlignButton label="y"><AlignYIcon /></AlignButton>
                <AlignButton label="z"><AlignYIcon /></AlignButton>
              </div>
            </aside>

            <div className="flex min-w-0 flex-1 flex-col">
              <div className="flex min-h-0 flex-1">
                <div className="flex w-[189px] shrink-0 flex-col">
                  <ObjectsTree />
                  <ResultView />
                </div>

                <main className="mr-[6px] ml-[6px] grid min-w-0 flex-1 grid-cols-2 grid-rows-2 gap-1">
                  <View title="XY view">
                    <XYScene />
                  </View>
                  <View title="Perspective view">
                    <PerspectiveScene />
                  </View>
                  <View title="XZ view">
                    <SideScene
                      wall={220}
                      topInset={228}
                      bottomInset={225}
                      source={[264, 244]}
                      plate={[228, 317]}
                      base="M235 264h7v11h-7zM244 264h2v11h-2zM250 264h2v11h-2zM254 264h2v11h-2zM262 264h2v11h-2zM508 264h3v11h-3zM517 264h2v11h-2zM521 264h2v11h-2zM529 264h2v11h-2zM533 264h4v11h-4z"
                    >
                      <path d="M388 284.500h42" stroke="#1f3aa0" strokeWidth="3" />
                      <path d="M430 277l22 7.500-22 8z" fill="#4c62b8" />
                      <path d="M430 291l22-6.500-22 8z" fill="#2a3f95" />
                      <ellipse cx="386.500" cy="284.500" rx="7.500" ry="8" fill="#50e250" />
                    </SideScene>
                  </View>
                  <View title="YZ view">
                    <SideScene
                      wall={208}
                      topInset={222}
                      bottomInset={217}
                      source={[345, 82]}
                      plate={[221, 330]}
                      base="M235 264h3v11h-3zM240 264h2v11h-2zM244 264h2v11h-2zM250 264h2v11h-2zM254 264h4v11h-4zM262 264h2v11h-2zM266 264h4v11h-4zM398 264h120v11h-120zM520 264h2v11h-2zM526 264h2v11h-2zM530 264h7v11h-7z"
                    >
                      <ellipse cx="386" cy="284.500" rx="7.500" ry="7.500" fill="url(#blueBall)" />
                      <path d="M386 284.500h44" stroke="#04b004" strokeWidth="3" />
                      <path d="M430 277l21 7.500-21 7.500z" fill="#2fc02f" />
                    </SideScene>
                  </View>
                </main>

                <OptimizationPanel />
              </div>

              <div className="mt-[7px] flex h-[110px] shrink-0">
                <ScriptPrompt />
                <ScriptWorkspace />
              </div>
            </div>
          </div>

          <footer className="relative flex h-[28px] shrink-0 items-start border-t border-[#b4b4b4] pt-[2px] pl-[2px] text-[10px] leading-[24px]">
            <div className="h-[23px] flex-1 border-t border-l border-[#a0a0a0]" />
            <div className="ml-px grid h-[23px] w-[361px] grid-cols-3 border-t border-l border-[#a0a0a0]">
              <span>x:</span>
              <span>y:</span>
              <span>z:</span>
            </div>
            <span className="w-[41px] pl-[29px]">&gt;</span>
            <span className="absolute right-4 bottom-0 font-['Liberation_Sans',sans-serif] text-[20px] leading-[22px] text-[#777777]/75">
              CSDN @weixin_50538161
            </span>
          </footer>
        </div>
      </div>
      <div className="h-2 shrink-0 border-t border-[#a9b4b8] bg-[#cdecef]" />
    </div>
  );
}
